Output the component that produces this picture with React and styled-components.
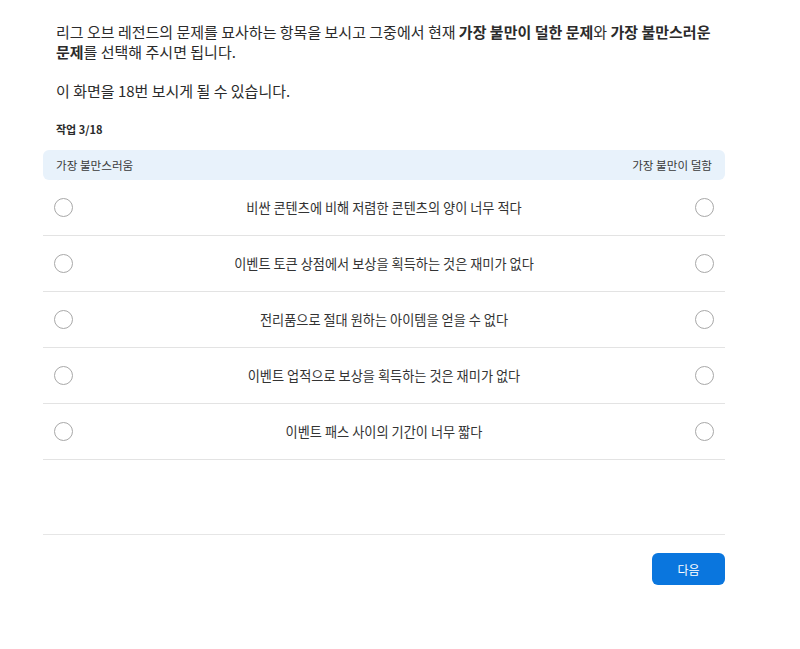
import { useState } from 'react';
import styled, { createGlobalStyle } from 'styled-components';

const items = [
  '비싼 콘텐츠에 비해 저렴한 콘텐츠의 양이 너무 적다',
  '이벤트 토큰 상점에서 보상을 획득하는 것은 재미가 없다',
  '전리품으로 절대 원하는 아이템을 얻을 수 없다',
  '이벤트 업적으로 보상을 획득하는 것은 재미가 없다',
  '이벤트 패스 사이의 기간이 너무 짧다',
];

const App = () => {
  const [most, setMost] = useState(null);
  const [least, setLeast] = useState(null);

  return (
    <>
      <GlobalStyle />
      <Page>
        <Intro>
          리그 오브 레전드의 문제를 묘사하는 항목을 보시고 그중에서 현재{' '}
          <b>가장 불만이 덜한 문제</b>와 <b>가장 불만스러운 문제</b>를 선택해
          주시면 됩니다.
          <br />
          <br />
          이 화면을 18번 보시게 될 수 있습니다.
        </Intro>
        <TaskLabel>작업 3/18</TaskLabel>
        <HeaderBar>
          <span>가장 불만스러움</span>
          <span>가장 불만이 덜함</span>
        </HeaderBar>
        <List>
          {items.map((item, index) => (
            <Row key={item}>
              <Radio
                $checked={most === index}
                onClick={() => setMost(index)}
                aria-label="가장 불만스러움"
              />
              <RowText>{item}</RowText>
              <Radio
                $checked={least === index}
                onClick={() => setLeast(index)}
                aria-label="가장 불만이 덜함"
              />
            </Row>
          ))}
        </List>
        <Footer>
          <NextButton>다음</NextButton>
        </Footer>
      </Page>
    </>
  );
};

export default App;

const GlobalStyle = createGlobalStyle`
  *, *::before, *::after {
    box-sizing: border-box;
  }

  body {
    margin: 0;
    background: #fff;
    font-family: "Noto Sans CJK KR", "Noto Sans", sans-serif;
    color: #2b2b2b;
  }
`;

const Page = styled.div`
  width: 682px;
  margin-left: 43px;
  padding-top: 22px;
`;

const Intro = styled.p`
  margin: 0;
  padding: 0 13px;
  font-size: 15px;
  line-height: 19.5px;
  color: #2b2b2b;

  b {
    font-weight: 700;
  }
`;

const TaskLabel = styled.div`
  margin-top: 21px;
  padding: 0 13px;
  font-size: 11px;
  font-weight: 700;
  line-height: 16px;
  color: #2b2b2b;
`;

const HeaderBar = styled.div`
  margin-top: 13px;
  height: 30px;
  padding: 0 13px;
  display: flex;
  align-items: center;
  justify-content: space-between;
  background: #e8f2fb;
  border-radius: 6px;
  font-size: 11.6px;
  color: #3a3a3a;
`;

const List = styled.div`
  display: flex;
  flex-direction: column;
`;

const Row = styled.div`
  height: 56px;
  padding: 0 11px;
  display: flex;
  align-items: center;
  border-bottom: 1px solid #e3e3e3;
`;

const RowText = styled.div`
  flex: 1;
  text-align: center;
  font-size: 13.2px;
  color: #333;
`;

const Radio = styled.button`
  width: 19px;
  height: 19px;
  padding: 0;
  border-radius: 50%;
  border: 1.5px solid #a8a8a8;
  background: #fff;
  cursor: pointer;
  box-shadow: ${({ $checked }) =>
    $checked ? 'inset 0 0 0 4px #fff, inset 0 0 0 10px #0a76de' : 'none'};
`;

const Footer = styled.div`
  margin-top: 74px;
  padding-top: 18px;
  border-top: 1px solid #e6e6e6;
  display: flex;
  justify-content: flex-end;
`;

const NextButton = styled.button`
  width: 73px;
  height: 32px;
  border: none;
  border-radius: 6px;
  background: #0a76de;
  color: #fff;
  font-family: inherit;
  font-size: 12px;
  cursor: pointer;
`;
